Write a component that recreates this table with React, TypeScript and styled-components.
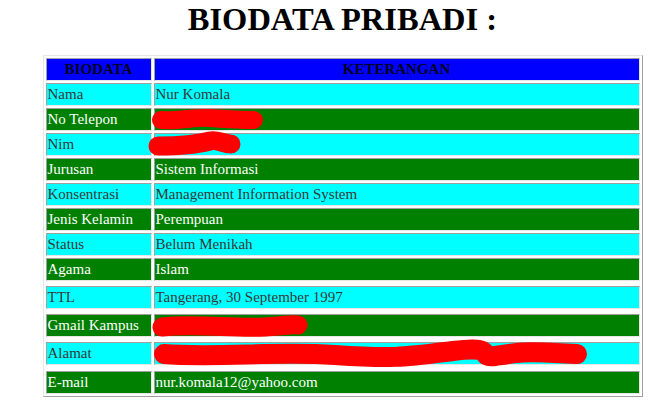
import React from "react";
import styled, { createGlobalStyle } from "styled-components";

const Global = createGlobalStyle`
  html, body { margin: 0; padding: 0; background: #ffffff; }
  body { font-family: "Liberation Serif", "Times New Roman", serif; }
`;

const Page = styled.div`
  width: 685px;
  display: flex;
  flex-direction: column;
  align-items: center;
`;

const Title = styled.h1`
  margin: 0;
  padding-top: 1px;
  font-family: "Liberation Serif", "Times New Roman", serif;
  font-size: 32.5px;
  line-height: 37px;
  font-weight: bold;
  color: #000;
`;

const Table = styled.div`
  margin-top: 17px;
  width: 600px;
  box-sizing: border-box;
  padding: 2px;
  border: 1px solid;
  border-color: #e6e6e6 #a0a0a0 #a0a0a0 #e6e6e6;
  display: flex;
  flex-direction: column;
`;

const Row = styled.div<{ $gap: number }>`
  display: grid;
  grid-template-columns: 106px 1fr;
  column-gap: 2px;
  margin-top: ${(p) => p.$gap}px;
`;

type Tone = "head" | "cyan" | "green";

const bg: Record<Tone, string> = {
  head: "#0000ff",
  cyan: "#00ffff",
  green: "#008000",
};
const fg: Record<Tone, string> = {
  head: "#000022",
  cyan: "#383838",
  green: "#ffffff",
};

const Cell = styled.div<{ $tone: Tone }>`
  position: relative;
  box-sizing: border-box;
  height: 23px;
  padding: 1px;
  border: 1px solid;
  border-color: #a0a0a0 #e6e6e6 #e6e6e6 #a0a0a0;
  background: ${(p) => bg[p.$tone]};
  color: ${(p) => fg[p.$tone]};
  font-family: "Liberation Serif", "Times New Roman", serif;
  font-size: 15px;
  line-height: 19px;
  white-space: nowrap;
  font-weight: ${(p) => (p.$tone === "head" ? "bold" : "normal")};
  text-align: ${(p) => (p.$tone === "head" ? "center" : "left")};
`;

const Scribble = styled.svg`
  position: absolute;
  left: 0;
  top: 0;
  width: 1px;
  height: 1px;
  overflow: visible;
  pointer-events: none;
`;

const Stroke = styled.path<{ $w: number }>`
  fill: none;
  stroke: #ff0000;
  stroke-width: ${(p) => p.$w};
  stroke-linecap: round;
  stroke-linejoin: round;
`;

type RowData = {
  label: string;
  value: string;
  tone: Tone;
  gap: number;
  scribble?: { d: string; w: number };
};

const rows: RowData[] = [
  { label: "Nama", value: "Nur Komala", tone: "cyan", gap: 2 },
  {
    label: "No Telepon",
    value: "",
    tone: "green",
    gap: 2,
    scribble: { d: "M6 11 C 25 12, 40 8, 55 9 S 85 11, 99 11", w: 18 },
  },
  {
    label: "Nim",
    value: "",
    tone: "cyan",
    gap: 2,
    scribble: { d: "M3 12 C 20 12, 40 11, 55 7 C 62 5, 68 10, 76 10", w: 19 },
  },
  { label: "Jurusan", value: "Sistem Informasi", tone: "green", gap: 2 },
  { label: "Konsentrasi", value: "Management Information System", tone: "cyan", gap: 2 },
  { label: "Jenis Kelamin", value: "Perempuan", tone: "green", gap: 2 },
  { label: "Status", value: "Belum Menikah", tone: "cyan", gap: 2 },
  { label: "Agama", value: "Islam", tone: "green", gap: 2 },
  { label: "TTL", value: "Tangerang, 30 September 1997", tone: "cyan", gap: 5 },
  {
    label: "Gmail Kampus",
    value: "",
    tone: "green",
    gap: 5,
    scribble: { d: "M7 12 C 40 8, 80 14, 110 12 S 138 9, 143 10", w: 19 },
  },
  {
    label: "Alamat",
    value: "",
    tone: "cyan",
    gap: 5,
    scribble: {
      d: "M9 11 C 60 15, 120 8, 180 12 S 250 14, 298 8 S 320 16, 340 13 S 370 8, 400 10 L 422 11",
      w: 20,
    },
  },
  { label: "E-mail", value: "nur.komala12@yahoo.com", tone: "green", gap: 6 },
];

export default function App() {
  return (
    <Page>
      <Global />
      <Title>BIODATA PRIBADI :</Title>
      <Table>
        <Row $gap={0}>
          <Cell $tone="head">BIODATA</Cell>
          <Cell $tone="head">KETERANGAN</Cell>
        </Row>
        {rows.map((r) => (
          <Row key={r.label} $gap={r.gap}>
            <Cell $tone={r.tone}>{r.label}</Cell>
            <Cell $tone={r.tone}>
              {r.value}
              {r.scribble && (
                <Scribble aria-hidden="true">
                  <Stroke d={r.scribble.d} $w={r.scribble.w} />
                </Scribble>
              )}
            </Cell>
          </Row>
        ))}
      </Table>
    </Page>
  );
}
